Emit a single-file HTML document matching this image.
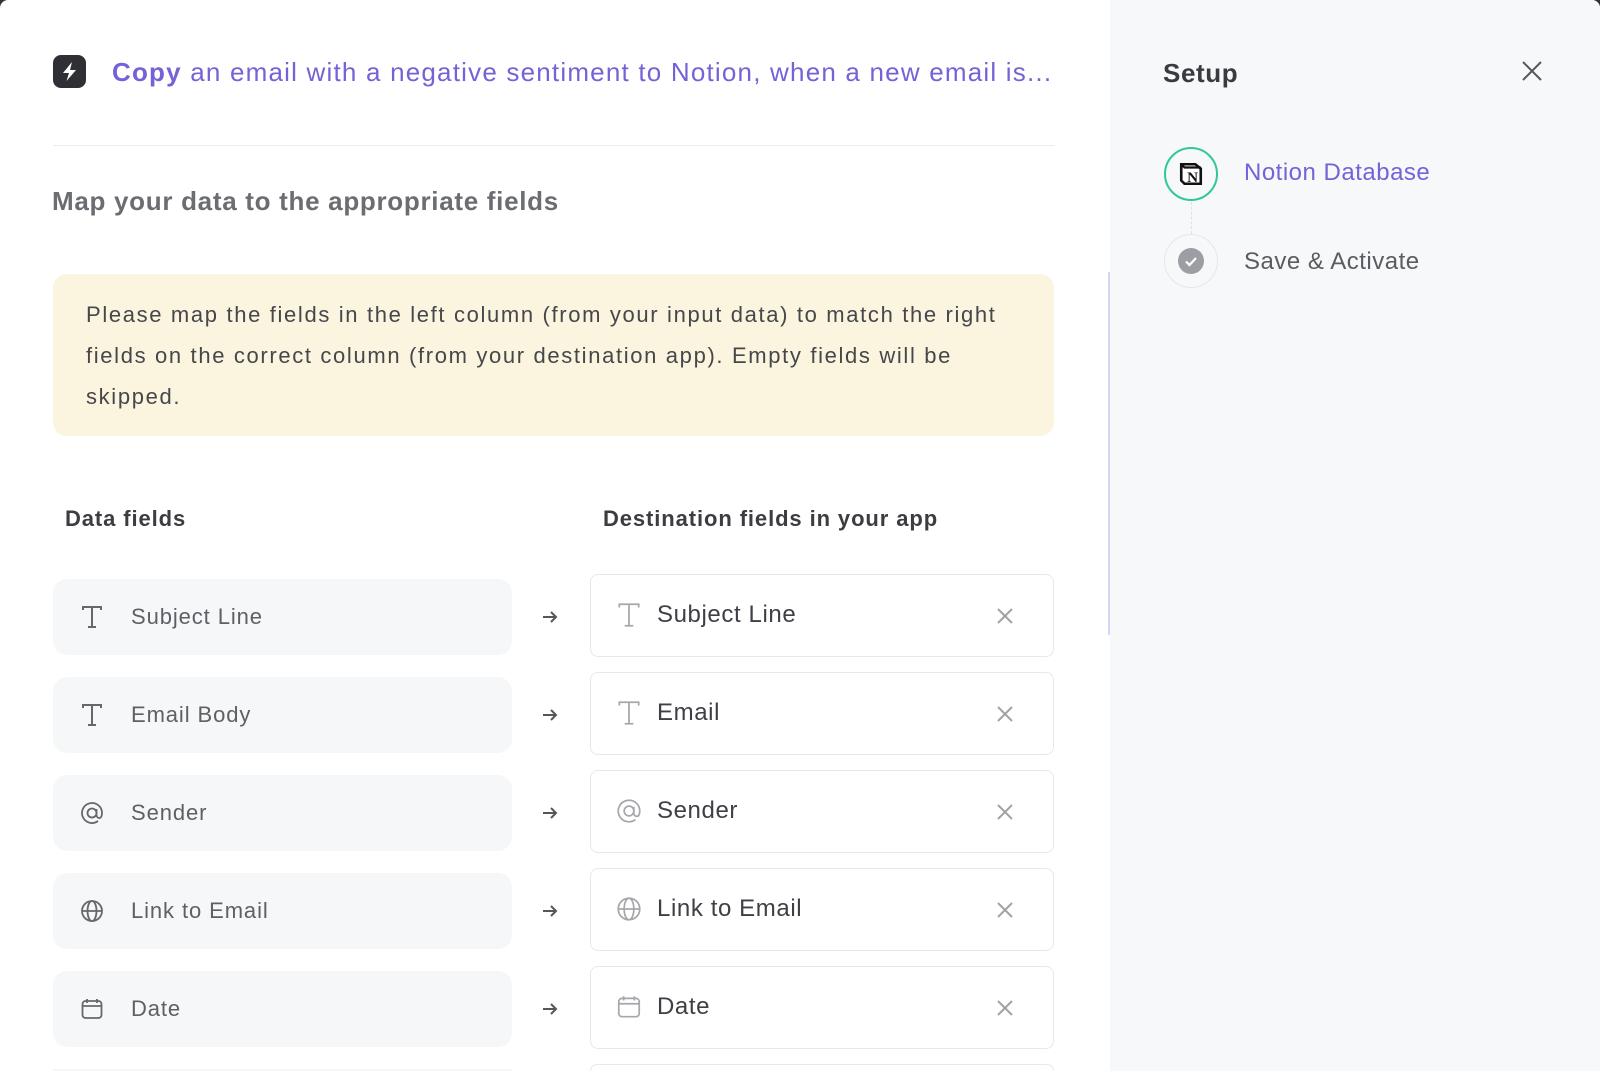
<!DOCTYPE html>
<html><head><meta charset="utf-8">
<style>
*{margin:0;padding:0;box-sizing:border-box}
html,body{width:1600px;height:1071px;overflow:hidden;background:#333}
body{font-family:"Liberation Sans",sans-serif;position:relative}
.modal{position:absolute;left:0;top:0;width:1600px;height:1071px;background:#fff;border-radius:8px 8px 0 0;overflow:hidden}
.side{position:absolute;left:1110px;top:0;width:490px;height:1071px;background:#f7f8fa}
.abs{position:absolute}
.title{left:112px;top:56px;font-size:26px;color:#7463d6;white-space:nowrap;line-height:32px;letter-spacing:1.2px}
.title b{font-weight:bold}
.hr{left:53px;top:145px;width:1002px;height:1px;background:#ececef}
.h2{left:52px;top:186px;font-size:26px;font-weight:bold;color:#6b6d72;line-height:30px;letter-spacing:0.7px}
.note{left:53px;top:274px;width:1001px;height:162px;background:#fbf4df;border-radius:14px;padding:20px 20px 0 33px;font-size:22px;line-height:41px;color:#46474b;letter-spacing:1.65px;white-space:nowrap}
.lab{font-size:22px;font-weight:bold;color:#3c3d41;line-height:26px;letter-spacing:0.9px}
.lrow{position:absolute;left:53px;width:459px;height:76px;background:#f6f7f9;border-radius:14px}
.lrow span{position:absolute;left:78px;top:24px;font-size:22px;color:#5e6066;line-height:28px;letter-spacing:0.9px}
.lrow svg{position:absolute;left:27px;top:25px}
.rrow{position:absolute;left:590px;width:464px;height:83px;background:#fff;border:1.5px solid #e7e8ea;border-radius:8px}
.rrow span{position:absolute;left:66px;top:25px;font-size:24px;color:#3f4045;line-height:30px;letter-spacing:0.6px}
.rrow svg.i{position:absolute;left:25px;top:26px}
.rrow svg.x{position:absolute;left:405px;top:32px}
.arr{position:absolute;left:541px}
</style></head><body>
<div class="modal">
<div class="side"></div>
<div class="abs" style="left:1108px;top:272px;width:2px;height:363px;background:#d9d4f5"></div>

<svg class="abs" style="left:53px;top:55px" width="33" height="33" viewBox="0 0 33 33"><rect width="33" height="33" rx="8" fill="#2f3036"/><path d="M19 7 L10 18 H16 L13.5 26 L23 15 H17 Z" fill="#fff"/></svg>
<div class="abs title"><b>Copy</b> an email with a negative sentiment to Notion, when a new email is...</div>
<div class="abs hr"></div>
<div class="abs h2">Map your data to the appropriate fields</div>
<div class="abs note">Please map the fields in the left column (from your input data) to match the right<br>fields on the correct column (from your destination app). Empty fields will be<br>skipped.</div>
<div class="abs lab" style="left:65px;top:506px">Data fields</div>
<div class="abs lab" style="left:603px;top:506px">Destination fields in your app</div>

<div class="lrow" style="top:579px"><svg width="24" height="26" viewBox="0 0 24 26" fill="none" stroke="#66686d" stroke-width="2"><path d="M3 6V3h18v3M12 3v20M8 23h8"/></svg><span>Subject Line</span></div>
<div class="lrow" style="top:677px"><svg width="24" height="26" viewBox="0 0 24 26" fill="none" stroke="#66686d" stroke-width="2"><path d="M3 6V3h18v3M12 3v20M8 23h8"/></svg><span>Email Body</span></div>
<div class="lrow" style="top:775px"><svg width="24" height="26" viewBox="0 0 24 26" fill="none" stroke="#66686d" stroke-width="1.8"><circle cx="12" cy="13" r="4.5"/><path d="M16.5 9v6c0 2 1.5 3 3 3s2.5-2 2.5-5a10 10 0 1 0-4 8"/></svg><span>Sender</span></div>
<div class="lrow" style="top:873px"><svg width="24" height="26" viewBox="0 0 24 26" fill="none" stroke="#66686d" stroke-width="1.8"><circle cx="12" cy="13" r="10"/><ellipse cx="12" cy="13" rx="4.5" ry="10"/><path d="M2 13h20"/></svg><span>Link to Email</span></div>
<div class="lrow" style="top:971px"><svg width="24" height="26" viewBox="0 0 24 26" fill="none" stroke="#66686d" stroke-width="1.8"><rect x="2.5" y="5" width="19" height="17" rx="3"/><path d="M2.5 10h19M7 3v4M17 3v4"/></svg><span>Date</span></div>
<div class="lrow" style="top:1069px;height:2px"></div>

<svg class="arr" style="top:608px" width="18" height="18" viewBox="0 0 18 18" fill="none" stroke="#55575c" stroke-width="2"><path d="M2 9h13M10 4l5 5-5 5"/></svg>
<svg class="arr" style="top:706px" width="18" height="18" viewBox="0 0 18 18" fill="none" stroke="#55575c" stroke-width="2"><path d="M2 9h13M10 4l5 5-5 5"/></svg>
<svg class="arr" style="top:804px" width="18" height="18" viewBox="0 0 18 18" fill="none" stroke="#55575c" stroke-width="2"><path d="M2 9h13M10 4l5 5-5 5"/></svg>
<svg class="arr" style="top:902px" width="18" height="18" viewBox="0 0 18 18" fill="none" stroke="#55575c" stroke-width="2"><path d="M2 9h13M10 4l5 5-5 5"/></svg>
<svg class="arr" style="top:1000px" width="18" height="18" viewBox="0 0 18 18" fill="none" stroke="#55575c" stroke-width="2"><path d="M2 9h13M10 4l5 5-5 5"/></svg>

<div class="rrow" style="top:574px"><svg class="i" width="26" height="28" viewBox="0 0 24 26" fill="none" stroke="#a5a7ab" stroke-width="1.6"><path d="M3 6V3h18v3M12 3v20M8 23h8"/></svg><span>Subject Line</span><svg class="x" width="18" height="18" viewBox="0 0 18 18" stroke="#a0a2a6" stroke-width="2"><path d="M2 2l14 14M16 2L2 16"/></svg></div>
<div class="rrow" style="top:672px"><svg class="i" width="26" height="28" viewBox="0 0 24 26" fill="none" stroke="#a5a7ab" stroke-width="1.6"><path d="M3 6V3h18v3M12 3v20M8 23h8"/></svg><span>Email</span><svg class="x" width="18" height="18" viewBox="0 0 18 18" stroke="#a0a2a6" stroke-width="2"><path d="M2 2l14 14M16 2L2 16"/></svg></div>
<div class="rrow" style="top:770px"><svg class="i" width="26" height="28" viewBox="0 0 24 26" fill="none" stroke="#a5a7ab" stroke-width="1.6"><circle cx="12" cy="13" r="4.5"/><path d="M16.5 9v6c0 2 1.5 3 3 3s2.5-2 2.5-5a10 10 0 1 0-4 8"/></svg><span>Sender</span><svg class="x" width="18" height="18" viewBox="0 0 18 18" stroke="#a0a2a6" stroke-width="2"><path d="M2 2l14 14M16 2L2 16"/></svg></div>
<div class="rrow" style="top:868px"><svg class="i" width="26" height="28" viewBox="0 0 24 26" fill="none" stroke="#a5a7ab" stroke-width="1.6"><circle cx="12" cy="13" r="10"/><ellipse cx="12" cy="13" rx="4.5" ry="10"/><path d="M2 13h20"/></svg><span>Link to Email</span><svg class="x" width="18" height="18" viewBox="0 0 18 18" stroke="#a0a2a6" stroke-width="2"><path d="M2 2l14 14M16 2L2 16"/></svg></div>
<div class="rrow" style="top:966px"><svg class="i" width="26" height="28" viewBox="0 0 24 26" fill="none" stroke="#a5a7ab" stroke-width="1.6"><rect x="2.5" y="5" width="19" height="17" rx="3"/><path d="M2.5 10h19M7 3v4M17 3v4"/></svg><span>Date</span><svg class="x" width="18" height="18" viewBox="0 0 18 18" stroke="#a0a2a6" stroke-width="2"><path d="M2 2l14 14M16 2L2 16"/></svg></div>
<div class="rrow" style="top:1064px;height:7px;border-bottom:none;border-radius:8px 8px 0 0"></div>

<div class="abs" style="left:1163px;top:57px;font-size:26px;font-weight:bold;color:#3a3b40;line-height:32px;letter-spacing:0.6px">Setup</div>
<svg class="abs" style="left:1521px;top:60px" width="22" height="22" viewBox="0 0 22 22" stroke="#55575c" stroke-width="2"><path d="M2 2l18 18M20 2L2 20"/></svg>

<div class="abs" style="left:1164px;top:147px;width:54px;height:54px;border:2px solid #2fc89a;border-radius:50%;background:#f7f8fa"></div>
<svg class="abs" style="left:1178px;top:161px" width="26" height="26" viewBox="0 0 24 24"><path d="M3 3h13l5 4v14H6L3 18Z" fill="#fff" stroke="#111" stroke-width="2.4"/><path d="M3 3l3 3h15" fill="none" stroke="#111" stroke-width="2"/><text x="13.5" y="19.5" font-family="Liberation Serif,serif" font-weight="bold" font-size="14" text-anchor="middle" fill="#111">N</text></svg>
<div class="abs" style="left:1244px;top:158px;font-size:24px;color:#7463d6;line-height:30px;letter-spacing:0.5px">Notion Database</div>
<div class="abs" style="left:1191px;top:202px;width:0;height:32px;border-left:1.5px dashed #e0e1e4"></div>
<div class="abs" style="left:1164px;top:234px;width:54px;height:54px;border:1.5px solid #e6e7ea;border-radius:50%"></div>
<svg class="abs" style="left:1178px;top:248px" width="26" height="26" viewBox="0 0 26 26"><circle cx="13" cy="13" r="13" fill="#9c9ea3"/><path d="M8 13.5l3.5 3.5L18 10" fill="none" stroke="#fff" stroke-width="2.2"/></svg>
<div class="abs" style="left:1244px;top:247px;font-size:24px;color:#5a5c61;line-height:30px;letter-spacing:0.5px">Save &amp; Activate</div>
</div>
</body></html>
